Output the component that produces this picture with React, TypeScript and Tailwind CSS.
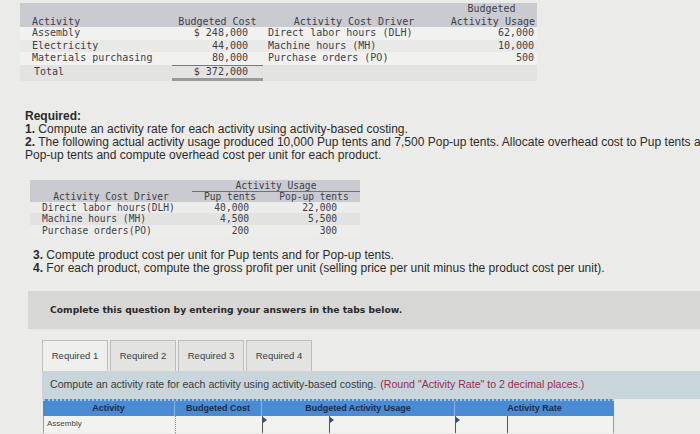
export default function App() {
  const topRows = [
    { activity: 'Assembly', cost: '$ 248,000', driver: 'Direct labor hours (DLH)', usage: '62,000', bg: 'bg-[#f1f1f0]' },
    { activity: 'Electricity', cost: '44,000', driver: 'Machine hours (MH)', usage: '10,000', bg: 'bg-[#e9e9e8]' },
    { activity: 'Materials purchasing', cost: '80,000', driver: 'Purchase orders (PO)', usage: '500', bg: 'bg-[#f1f1f0]' },
  ]
  const usageRows = [
    { driver: 'Direct labor hours(DLH)', pup: '40,000', pop: '22,000', bg: 'bg-[#ececeb]' },
    { driver: 'Machine hours (MH)', pup: '4,500', pop: '5,500', bg: 'bg-[#e2e2e1]' },
    { driver: 'Purchase orders(PO)', pup: '200', pop: '300', bg: 'bg-[#ececeb]' },
  ]
  const tabs = ['Required 1', 'Required 2', 'Required 3', 'Required 4']

  return (
    <div className="w-[700px] h-[434px] overflow-hidden bg-[#ebebe9] flex flex-col font-['Liberation_Sans',Arial,sans-serif]">
      {/* Budget table */}
      <div className="ml-[20px] mt-[3px] w-[517px] font-['DejaVu_Sans_Mono',monospace] text-[10px] leading-[12.5px] text-[#3c4048]">
        <div className="grid grid-cols-[152px_91px_177px_97px] h-[24px] bg-[#c9cbd0] items-end">
          <div className="pl-[12px]">Activity</div>
          <div className="text-center">Budgeted Cost</div>
          <div className="text-center pl-[5px]">Activity Cost Driver</div>
          <div className="text-right pr-[2px]">
            <div className="text-center pl-[8px]">Budgeted</div>
            <div>Activity Usage</div>
          </div>
        </div>
        {topRows.map((r) => (
          <div key={r.activity} className={`grid grid-cols-[152px_91px_177px_97px] h-[12.5px] ${r.bg}`}>
            <div className="pl-[12px]">{r.activity}</div>
            <div className="text-right pr-[15px]">{r.cost}</div>
            <div className="pl-[5px]">{r.driver}</div>
            <div className="text-right pr-[3px]">{r.usage}</div>
          </div>
        ))}
        <div className="grid grid-cols-[152px_91px_177px_97px] h-[16px] bg-[#e3e3e2]">
          <div className="pl-[14px] pt-[1px]">Total</div>
          <div className="text-right pr-[15px] border-t border-[#7a7a7a] border-b-[3px] border-b-[#9a9a9c]">$ 372,000</div>
          <div />
          <div />
        </div>
      </div>

      {/* Required */}
      <div className="mt-[29px] pl-[25px] text-[12px] leading-[13.3px] text-[#2b2b2b] whitespace-nowrap">
        <div className="font-bold">Required:</div>
        <div><span className="font-bold">1.</span> Compute an activity rate for each activity using activity-based costing.</div>
        <div>
          <span className="font-bold">2.</span> The following actual activity usage produced 10,000 Pup tents and 7,500 Pop-up tents. Allocate overhead cost to Pup tents and
        </div>
        <div>Pop-up tents and compute overhead cost per unit for each product.</div>
      </div>

      {/* Usage table */}
      <div className="ml-[30px] mt-[17px] w-[330px] font-['DejaVu_Sans_Mono',monospace] text-[9.6px] leading-[11.5px] text-[#3c4048]">
        <div className="bg-[#c9cbd0] h-[22px]">
          <div className="grid grid-cols-[162px_76px_92px] h-[11px]">
            <div />
            <div className="col-span-2 text-center border-b border-[#6f7278] leading-[11px]">Activity Usage</div>
          </div>
          <div className="grid grid-cols-[162px_76px_92px] h-[11px] leading-[11px]">
            <div className="text-center">Activity Cost Driver</div>
            <div className="text-center">Pup tents</div>
            <div className="text-center">Pop-up tents</div>
          </div>
        </div>
        {usageRows.map((r) => (
          <div key={r.driver} className={`grid grid-cols-[162px_76px_92px] h-[11.5px] ${r.bg}`}>
            <div className="pl-[12px]">{r.driver}</div>
            <div className="text-right pr-[19px]">{r.pup}</div>
            <div className="text-right pr-[23px]">{r.pop}</div>
          </div>
        ))}
      </div>

      {/* Items 3 and 4 */}
      <div className="mt-[13px] pl-[33px] text-[12px] leading-[13.3px] text-[#2b2b2b] whitespace-nowrap">
        <div><span className="font-bold">3.</span> Compute product cost per unit for Pup tents and for Pop-up tents.</div>
        <div><span className="font-bold">4.</span> For each product, compute the gross profit per unit (selling price per unit minus the product cost per unit).</div>
      </div>

      {/* Instruction box */}
      <div className="ml-[28px] mt-[15px] h-[38px] bg-[#d7d7d5] flex items-center pl-[22px] font-['DejaVu_Sans',sans-serif] font-bold text-[9.2px] text-[#2a2a2a]">
        Complete this question by entering your answers in the tabs below.
      </div>

      {/* Tabs */}
      <div className="ml-[42px] mt-[11px] flex gap-[2px] items-end">
        {tabs.map((t, i) => (
          <div
            key={t}
            className={`w-[66px] h-[31px] border border-b-0 border-[#bdbdbb] flex items-center justify-center text-[9.5px] text-[#3a3a3a] ${
              i === 0 ? 'bg-[#efefed]' : 'bg-[#e3e3e1]'
            }`}
          >
            {t}
          </div>
        ))}
      </div>

      {/* Instruction bar */}
      <div className="ml-[42px] h-[28px] bg-[#c8d6dc] flex items-center pl-[8px] text-[10.6px] text-[#3a3a3a] whitespace-nowrap">
        <span>Compute an activity rate for each activity using activity-based costing.</span>
        <span className="ml-[4px] text-[#9c2a4c]">(Round "Activity Rate" to 2 decimal places.)</span>
      </div>

      {/* Answer table */}
      <div className="ml-[43px] w-[571px] text-[9px]">
        <div className="grid grid-cols-[131px_87px_193px_160px] h-[17px] bg-[#4a8cd4] border-t-2 border-dotted border-[#9cc3ea] font-bold text-[#1d2b48]">
          <div className="text-center leading-[15px]">Activity</div>
          <div className="text-center leading-[15px] border-l border-[#8db6e2]">Budgeted Cost</div>
          <div className="text-center leading-[15px] border-l border-[#8db6e2]">Budgeted Activity Usage</div>
          <div className="text-center leading-[15px] border-l border-[#8db6e2]">Activity Rate</div>
        </div>
        <div className="grid grid-cols-[131px_87px_67px_126px_52px_108px] h-[17px] bg-[#f2f2f1] border-l border-r border-[#9a9a9a] text-[8px] text-[#444]">
          <div className="pl-[3px] leading-[16px]">Assembly</div>
          <div className="border-l border-dotted border-[#888]" />
          <div className="relative border-l border-[#555]">
            <span className="absolute left-0 top-[1px] w-0 h-0 border-y-[3px] border-y-transparent border-l-[4px] border-l-[#2c4f8a]" />
          </div>
          <div className="relative border-l border-[#555]">
            <span className="absolute left-0 top-[1px] w-0 h-0 border-y-[3px] border-y-transparent border-l-[4px] border-l-[#2c4f8a]" />
          </div>
          <div className="relative border-l border-[#555]">
            <span className="absolute left-0 top-[1px] w-0 h-0 border-y-[3px] border-y-transparent border-l-[4px] border-l-[#2c4f8a]" />
          </div>
          <div className="border-l border-[#555]" />
        </div>
      </div>
    </div>
  )
}
